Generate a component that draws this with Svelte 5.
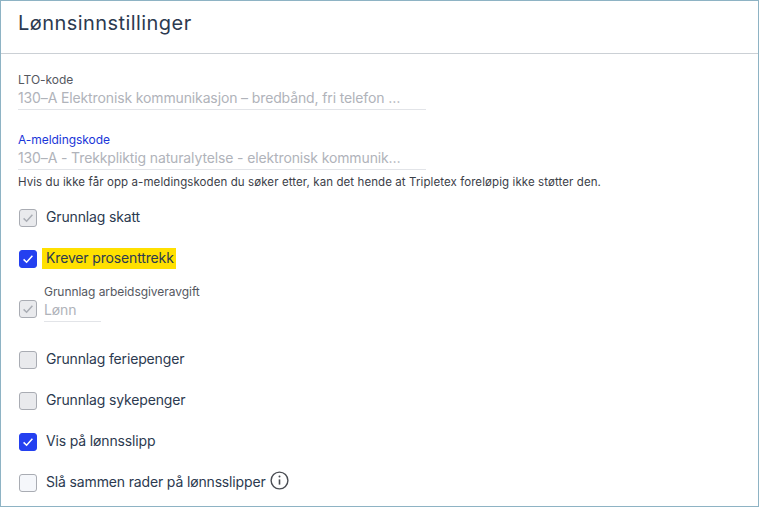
<script lang="ts">
	const fields = [
		{ label: 'LTO-kode', value: '130–A Elektronisk kommunikasjon – bredbånd, fri telefon …', active: false },
		{ label: 'A-meldingskode', value: '130–A - Trekkpliktig naturalytelse - elektronisk kommunik…', active: true }
	];

	const lower = [
		{ label: 'Grunnlag feriepenger', state: 'disabled' },
		{ label: 'Grunnlag sykepenger', state: 'disabled' },
		{ label: 'Vis på lønnsslipp', state: 'checked' }
	];
</script>

{#snippet box(state: string)}
	<span class="box {state}">
		{#if state === 'checked' || state === 'disabled-checked'}
			<svg width="14" height="14" viewBox="0 0 14 14" fill="none">
				<path d="M2.6 7.4 5.6 10.2 11.4 3.8" stroke="currentColor" stroke-width="1.5" />
			</svg>
		{/if}
	</span>
{/snippet}

<div class="panel">
	<header>
		<h1>Lønnsinnstillinger</h1>
	</header>

	<div class="content">
		{#each fields as field (field.label)}
			<div class="field" class:active={field.active}>
				<span class="label">{field.label}</span>
				<span class="value">{field.value}</span>
			</div>
		{/each}
		<p class="hint">
			Hvis du ikke får opp a-meldingskoden du søker etter, kan det hende at Tripletex foreløpig ikke
			støtter den.
		</p>

		<div class="check first">
			{@render box('disabled-checked')}
			<span class="text">Grunnlag skatt</span>
		</div>

		<div class="check">
			{@render box('checked')}
			<span class="text marked">Krever prosenttrekk</span>
		</div>

		<div class="check combo">
			{@render box('disabled-checked')}
			<div class="small-field">
				<span class="label">Grunnlag arbeidsgiveravgift</span>
				<span class="value">Lønn</span>
			</div>
		</div>

		{#each lower as row (row.label)}
			<div class="check">
				{@render box(row.state)}
				<span class="text">{row.label}</span>
			</div>
		{/each}

		<div class="check">
			{@render box('empty')}
			<span class="text">Slå sammen rader på lønnsslipper</span>
			<svg class="info" width="19" height="19" viewBox="0 0 19 19" fill="none">
				<circle cx="9.5" cy="9.5" r="8.4" stroke="currentColor" stroke-width="1.4" />
				<path d="M9.5 8.4v5.2" stroke="currentColor" stroke-width="1.6" />
				<circle cx="9.5" cy="5.6" r="1" fill="currentColor" />
			</svg>
		</div>
	</div>
</div>

<style>
	:global(body) {
		background: #fff;
		font-family: Inter, 'Noto Sans', sans-serif;
	}

	.panel {
		box-sizing: border-box;
		height: 507px;
		overflow: hidden;
		border: 1px solid #8eb3c4;
		background: #fff;
	}

	header {
		height: 53px;
		box-sizing: border-box;
		padding: 9px 17px 0;
		border-bottom: 1px solid #cbd0d5;
	}

	h1 {
		margin: 0;
		font-size: 20px;
		line-height: 26px;
		font-weight: 400;
		letter-spacing: 0.44px;
		color: #2c3a50;
	}

	.content {
		padding: 19px 17px 0;
	}

	.field {
		display: flex;
		flex-direction: column;
		box-sizing: border-box;
		width: 408px;
		height: 37px;
		margin-bottom: 23px;
		border-bottom: 1px solid #e2e4e8;
	}

	.field.active {
		margin-bottom: 0;
	}

	.label {
		font-size: 12px;
		line-height: 14px;
		letter-spacing: -0.05px;
		color: #55585f;
	}

	.field.active .label {
		color: #1a35d8;
	}

	.value {
		margin-top: 1px;
		font-size: 14px;
		line-height: 20px;
		letter-spacing: -0.13px;
		color: #b0b3ba;
		white-space: nowrap;
	}

	.hint {
		margin: 4px 0 0;
		font-size: 11.5px;
		line-height: 16px;
		letter-spacing: 0.09px;
		color: #3c4048;
	}

	.check {
		display: flex;
		align-items: center;
		height: 24px;
		margin-top: 17px;
	}

	.check.first {
		margin-top: 15px;
	}

	.box {
		box-sizing: border-box;
		flex: none;
		display: flex;
		align-items: center;
		justify-content: center;
		width: 18px;
		height: 18px;
		margin: 2px 9px 0 1px;
		border-radius: 3px;
		border: 1px solid #a9acb3;
	}

	.box.disabled,
	.box.disabled-checked {
		background: #e9eaed;
		color: #a9adb4;
	}

	.box.checked {
		background: #2440f0;
		border-color: #2440f0;
		color: #fff;
	}

	.box.empty {
		background: #f5f7fb;
	}

	.text {
		padding-bottom: 1px;
		font-size: 14px;
		line-height: 20px;
		letter-spacing: -0.15px;
		color: #2c3a50;
	}

	.text.marked {
		margin-left: -4px;
		padding: 0 2px 1px 4px;
		background: #ffe000;
	}

	.check.combo {
		height: 37px;
		margin-top: 15px;
		margin-bottom: 25px;
	}

	.combo .box {
		margin: 10px 7px 0 1px;
	}

	.small-field {
		display: flex;
		flex-direction: column;
		box-sizing: border-box;
		width: 57px;
		height: 37px;
		border-bottom: 1px solid #e2e4e8;
		white-space: nowrap;
	}

	.info {
		margin: -4px 0 0 4px;
		color: #4a4d53;
	}
</style>
